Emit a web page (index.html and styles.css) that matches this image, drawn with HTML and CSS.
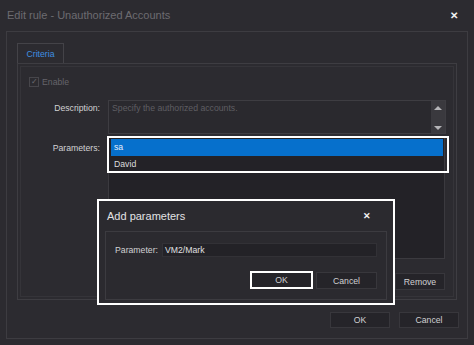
FILE: index.html
```html
<!DOCTYPE html>
<html lang="en">

<head>
    <meta charset="UTF-8">
    <meta name="viewport" content="width=device-width, initial-scale=1.0">
    <title>Edit rule - Unauthorized Accounts</title>
    <link rel="stylesheet" href="styles.css">
</head>

<body>
    <div class="window">
        <div class="titlebar">
            <span class="title">Edit rule - Unauthorized Accounts</span>
            <span class="close">&#x2715;</span>
        </div>
        <div class="group">
            <div class="tabs">
                <div class="tab">Criteria</div>
            </div>
            <div class="panel">
                <div class="check">
                    <span class="box">&#x2713;</span>
                    <span>Enable</span>
                </div>
                <div class="row">
                    <span class="label">Description:</span>
                    <div class="textarea">
                        <span class="placeholder">Specify the authorized accounts.</span>
                        <div class="scroll">
                            <svg width="8" height="4" viewBox="0 0 8 4"><path d="M0 4 L4 0 L8 4 Z" fill="#b5b5b8"/></svg>
                            <svg width="8" height="4" viewBox="0 0 8 4"><path d="M0 0 L4 4 L8 0 Z" fill="#b5b5b8"/></svg>
                        </div>
                    </div>
                </div>
                <div class="row params">
                    <span class="label">Parameters:</span>
                    <div class="listbox">
                        <div class="item selected">sa</div>
                        <div class="item">David</div>
                    </div>
                </div>
                <div class="actions">
                    <button class="btn remove">Remove</button>
                </div>
            </div>
            <div class="footer">
                <button class="btn">OK</button>
                <button class="btn">Cancel</button>
            </div>
        </div>

        <!-- markers drawn over the list -->
        <div class="highlight"></div>

        <div class="dialog">
            <div class="dialog-head">
                <span class="dialog-title">Add parameters</span>
                <span class="close small">&#x2715;</span>
            </div>
            <div class="dialog-body">
                <div class="field">
                    <span class="field-label">Parameter:</span>
                    <div class="input">VM2/Mark</div>
                </div>
                <div class="dialog-actions">
                    <button class="btn ok">OK</button>
                    <button class="btn cancel">Cancel</button>
                </div>
            </div>
        </div>
    </div>
</body>

</html>
```

FILE: styles.css
```css
* {
    margin: 0;
    padding: 0;
    box-sizing: border-box;
}

body {
    background-color: #2c2b30;
    font-family: "Liberation Sans", Arial, sans-serif;
    font-size: 8.7px;
    color: #d4d4d6;
}

.window {
    position: relative;
    width: 474px;
    height: 345px;
    overflow: hidden;
}

.titlebar {
    height: 31px;
    display: flex;
    align-items: center;
    justify-content: space-between;
    padding: 0 16px 1px 7px;
}

.title {
    font-size: 11px;
    color: #6c6b70;
}

.close {
    font-size: 10px;
    font-weight: bold;
    color: #f2f2f2;
}

.group {
    margin: 0 6px;
    height: 308px;
    border: 1px solid #3d3c41;
    padding: 11px 0 0 10px;
    display: flex;
    flex-direction: column;
}

.tabs {
    display: flex;
}

.tab {
    width: 47px;
    height: 20px;
    border: 1px solid #444348;
    border-bottom: none;
    color: #3f8fe0;
    display: flex;
    align-items: center;
    justify-content: center;
    padding-top: 1px;
}

.panel {
    margin-right: 10px;
    height: 237px;
    border: 1px solid #3e3d42;
    box-shadow: inset 0 0 0 2px #2c2b30, inset 0 0 0 3px #353439;
    padding: 13px 10px 0 11px;
    display: flex;
    flex-direction: column;
}

.check {
    display: flex;
    align-items: center;
    gap: 3px;
    color: #65646a;
    height: 10px;
}

.check .box {
    width: 10px;
    height: 10px;
    border: 1px solid #47464b;
    font-size: 8px;
    line-height: 8px;
    text-align: center;
    color: #6d6c71;
}

.row {
    display: flex;
    gap: 8px;
    margin-top: 13px;
}

.label {
    width: 71px;
    text-align: right;
    padding-top: 3px;
    color: #d2d2d4;
}

.textarea {
    flex: 1;
    height: 34px;
    background-color: #2a292e;
    border: 1px solid #3e3d42;
    display: flex;
    justify-content: space-between;
}

.placeholder {
    color: #5f5e63;
    padding: 2px 0 0 3px;
}

.scroll {
    width: 14px;
    background-color: #3a393e;
    display: flex;
    flex-direction: column;
    justify-content: space-between;
    align-items: center;
    padding: 5px 0 3px;
}

.params {
    margin-top: 3px;
}

.params .label {
    padding-top: 6px;
}

.listbox {
    flex: 1;
    height: 122px;
    margin-right: 1px;
    background-color: #232227;
    border: 1px solid #3b3a3f;
    padding: 1px 1px 0 2px;
}

.item {
    height: 16px;
    line-height: 16px;
    padding-left: 3px;
    color: #dcdcde;
}

.item.selected {
    height: 17px;
    line-height: 17px;
    background-color: #0670cc;
    color: #e6eefa;
}

.actions {
    display: flex;
    justify-content: flex-end;
    margin-top: 14px;
    padding-right: 1px;
}

.btn {
    font-family: inherit;
    font-size: 8.7px;
    color: #d0d0d2;
    background-color: #252429;
    border: 1px solid #38373c;
    height: 17px;
}

.remove {
    width: 50px;
}

.footer {
    display: flex;
    justify-content: flex-end;
    gap: 9px;
    margin-top: 12px;
    padding-right: 8px;
}

.footer .btn {
    width: 60px;
    height: 16px;
}

.highlight {
    position: absolute;
    left: 107px;
    top: 136px;
    width: 342px;
    height: 37px;
    border: 2px solid #ffffff;
}

.dialog {
    position: absolute;
    left: 97px;
    top: 199px;
    width: 298px;
    height: 106px;
    border: 2px solid #ffffff;
    background-color: #2b2a2f;
    padding: 0 6px 3px;
    display: flex;
    flex-direction: column;
}

.dialog-head {
    height: 30px;
    display: flex;
    align-items: center;
    justify-content: space-between;
    padding: 0 16px 0 2px;
}

.dialog-title {
    font-size: 11px;
    color: #e2e2e4;
}

.close.small {
    font-size: 9px;
}

.dialog-body {
    flex: 1;
    border: 1px solid #3c3b40;
    padding: 11px 9px 0 9px;
}

.field {
    display: flex;
    align-items: center;
    gap: 4px;
}

.field-label {
    color: #d2d2d4;
}

.input {
    flex: 1;
    height: 14px;
    background-color: #232227;
    border: 1px solid #323136;
    padding-left: 2px;
    line-height: 12px;
    color: #e0e0e2;
}

.dialog-actions {
    display: flex;
    justify-content: flex-end;
    gap: 3px;
    margin-top: 14px;
}

.dialog-actions .ok {
    width: 63px;
    height: 18px;
    border: 2px solid #ffffff;
}

.dialog-actions .cancel {
    width: 61px;
    height: 17px;
    margin-top: 1px;
}
```
